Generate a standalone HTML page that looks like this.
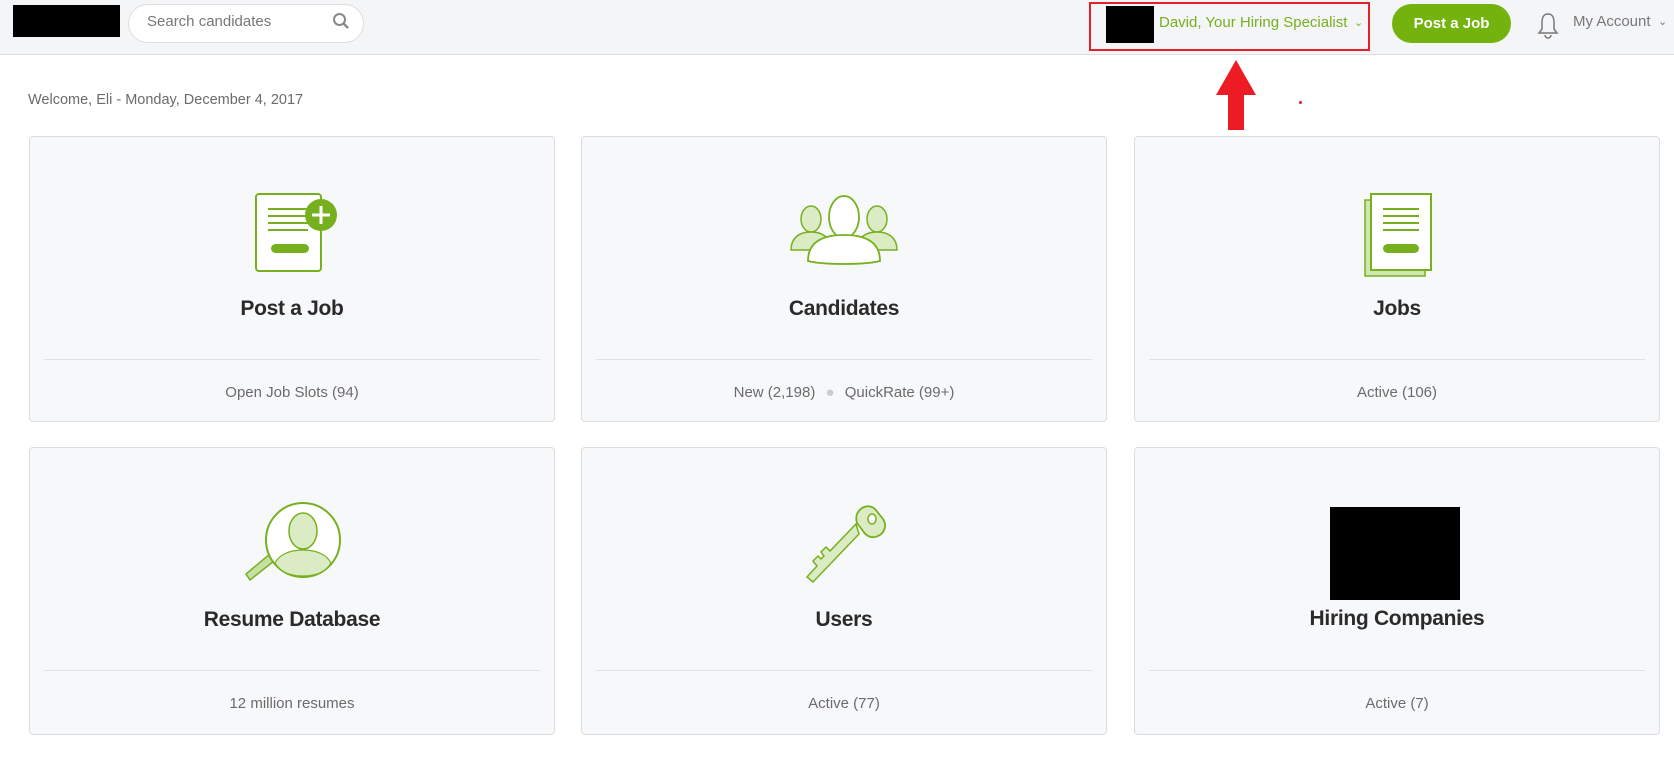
<!DOCTYPE html>
<html><head><style>
*{margin:0;padding:0;box-sizing:border-box}
body{width:1674px;height:763px;background:#fff;font-family:"Segoe UI","Liberation Sans",sans-serif;position:relative;overflow:hidden}
.hdr{position:absolute;left:0;top:0;width:1674px;height:55px;background:#f4f5f7;border-bottom:1px solid #dcdde0}
.abs{position:absolute}
.card{position:absolute;background:#f7f8fa;border:1px solid #dcdde0;border-radius:4px}
.card .t{position:absolute;left:0;right:0;text-align:center;font-weight:bold;font-size:21px;color:#2a2a2a;top:160px;letter-spacing:-0.3px}
.card .hr{position:absolute;left:14px;right:14px;top:222px;border-top:1px solid #e1e2e5}
.card .f{position:absolute;left:0;right:0;text-align:center;font-size:15px;color:#6b6b6b;top:247px}
.card svg{position:absolute;left:50%;transform:translateX(-50%);top:45px}
</style></head><body>
<div class="hdr"></div>
<div class="abs" style="left:13px;top:5px;width:107px;height:32px;background:#000"></div>
<div class="abs" style="left:128px;top:4px;width:236px;height:39px;background:#fff;border:1px solid #dcdde0;border-radius:20px"></div>
<div class="abs" style="left:147px;top:13px;font-size:15px;color:#777">Search candidates</div>
<svg class="abs" style="left:332px;top:12px" width="18" height="18" viewBox="0 0 18 18"><circle cx="7.5" cy="7.5" r="5.5" fill="none" stroke="#888" stroke-width="2"/><line x1="11.5" y1="11.5" x2="16" y2="16" stroke="#888" stroke-width="2.4"/></svg>
<div class="abs" style="left:1089px;top:2px;width:281px;height:49px;border:2px solid #e5202a"></div>
<div class="abs" style="left:1106px;top:6px;width:48px;height:37px;background:#000"></div>
<div class="abs" style="left:1159px;top:14px;font-size:15px;color:#77b01f">David, Your Hiring Specialist</div>
<div class="abs" style="left:1354px;top:16px;font-size:11px;color:#77b01f">&#8964;</div>
<div class="abs" style="left:1392px;top:4px;width:119px;height:39px;background:#74b20d;border-radius:20px;color:#fff;font-weight:bold;font-size:15px;text-align:center;line-height:39px">Post a Job</div>
<svg class="abs" style="left:1536px;top:11px" width="24" height="28" viewBox="0 0 24 28"><path d="M12 3C7 3 6 7 6 12v6l-3 4h18l-3-4v-6c0-5-1-9-6-9z" fill="none" stroke="#777" stroke-width="1.5"/><path d="M9 24a3 3 0 0 0 6 0" fill="none" stroke="#777" stroke-width="1.5"/></svg>
<div class="abs" style="left:1573px;top:13px;font-size:15px;color:#777">My Account</div>
<div class="abs" style="left:1658px;top:15px;font-size:11px;color:#777">&#8964;</div>
<svg class="abs" style="left:1212px;top:58px" width="48" height="74" viewBox="0 0 48 74"><path d="M24 2L4 37h12v35h16V37h12z" fill="#ed1c24"/></svg>
<div class="abs" style="left:1299px;top:101px;width:3px;height:3px;background:#ed1c24;border-radius:50%"></div>
<div class="abs" style="left:28px;top:92px;font-size:14.5px;color:#6b6b6b">Welcome, Eli - Monday, December 4, 2017</div>

<div class="card" style="left:29px;top:136px;width:526px;height:286px">
<svg style="top:55px;margin-left:7px" width="90" height="84" viewBox="0 0 90 84"><rect x="2" y="2" width="65" height="77" rx="3" fill="#fff" stroke="#77b01f" stroke-width="2"/><g stroke="#77b01f" stroke-width="2"><line x1="14" y1="17" x2="54" y2="17"/><line x1="14" y1="24" x2="54" y2="24"/><line x1="14" y1="31" x2="54" y2="31"/><line x1="14" y1="38" x2="54" y2="38"/></g><rect x="17" y="52" width="38" height="9" rx="4.5" fill="#77b01f"/><circle cx="67" cy="23" r="16" fill="#77b01f"/><path d="M67 14v18M58 23h18" stroke="#fff" stroke-width="3"/></svg>
<div class="t">Post a Job</div><div class="hr"></div><div class="f">Open Job Slots (94)</div></div>

<div class="card" style="left:581px;top:136px;width:526px;height:286px">
<svg style="top:58px" width="110" height="70" viewBox="0 0 110 70"><g fill="#dbebc3" stroke="#77b01f" stroke-width="1.5"><ellipse cx="22" cy="24" rx="10" ry="13"/><path d="M2 55c0-12 8-18 20-18s20 6 20 18z"/><ellipse cx="88" cy="24" rx="10" ry="13"/><path d="M68 55c0-12 8-18 20-18s20 6 20 18z"/></g><g fill="#fff" stroke="#77b01f" stroke-width="1.8"><ellipse cx="55" cy="22" rx="15" ry="21"/><path d="M19 66c0-20 16-26 36-26s36 6 36 26c-16 4-56 4-72 0z"/></g></svg>
<div class="t">Candidates</div><div class="hr"></div><div class="f">New (2,198) <span style="color:#ccc;margin:0 6px">&#9679;</span> QuickRate (99+)</div></div>

<div class="card" style="left:1134px;top:136px;width:526px;height:286px">
<svg style="top:55px" width="72" height="86" viewBox="0 0 72 86"><rect x="4" y="8" width="60" height="76" fill="#cfe6b0" stroke="#77b01f" stroke-width="1.5"/><rect x="10" y="2" width="60" height="76" fill="#fff" stroke="#77b01f" stroke-width="2"/><g stroke="#77b01f" stroke-width="2"><line x1="22" y1="17" x2="58" y2="17"/><line x1="22" y1="24" x2="58" y2="24"/><line x1="22" y1="31" x2="58" y2="31"/><line x1="22" y1="38" x2="58" y2="38"/></g><rect x="22" y="52" width="36" height="9" rx="4.5" fill="#77b01f"/></svg>
<div class="t">Jobs</div><div class="hr"></div><div class="f">Active (106)</div></div>

<div class="card" style="left:29px;top:447px;width:526px;height:288px">
<svg style="top:52px" width="100" height="86" viewBox="0 0 100 86"><path d="M28 54L4 74l4 6 24-19z" fill="#c5e0a2" stroke="#77b01f" stroke-width="1.5"/><circle cx="61" cy="40" r="37" fill="#fff" stroke="#77b01f" stroke-width="2"/><ellipse cx="61" cy="31" rx="14" ry="18" fill="#dbebc3" stroke="#77b01f" stroke-width="1.5"/><path d="M33 63c4-8 14-13 28-13s24 5 28 13c-6 10-17 13-28 13s-22-3-28-13z" fill="#dbebc3" stroke="#77b01f" stroke-width="1.2"/></svg>
<div class="t">Resume Database</div><div class="hr"></div><div class="f">12 million resumes</div></div>

<div class="card" style="left:581px;top:447px;width:526px;height:288px">
<svg style="top:56px" width="90" height="80" viewBox="0 0 90 80"><path d="M60 30L14 78l-6-5 10-11-4-5 5-5 3 3 3-3-3-4 5-5 4 4 26-27z" fill="#dbebc3" stroke="#77b01f" stroke-width="1.5"/><path d="M58 10c4-8 12-10 18-5l8 10c4 6 2 14-5 17-6 3-12 0-15-5l-6-8c-1-3-1-6 0-9z" fill="#dbebc3" stroke="#77b01f" stroke-width="1.8"/><ellipse cx="73" cy="15" rx="4" ry="5" fill="#fff" stroke="#77b01f" stroke-width="1.5"/></svg>
<div class="t">Users</div><div class="hr"></div><div class="f">Active (77)</div></div>

<div class="card" style="left:1134px;top:447px;width:526px;height:288px">
<div class="abs" style="left:195px;top:59px;width:130px;height:93px;background:#000"></div>
<div class="t" style="top:159px">Hiring Companies</div><div class="hr"></div><div class="f">Active (7)</div></div>
</body></html>
